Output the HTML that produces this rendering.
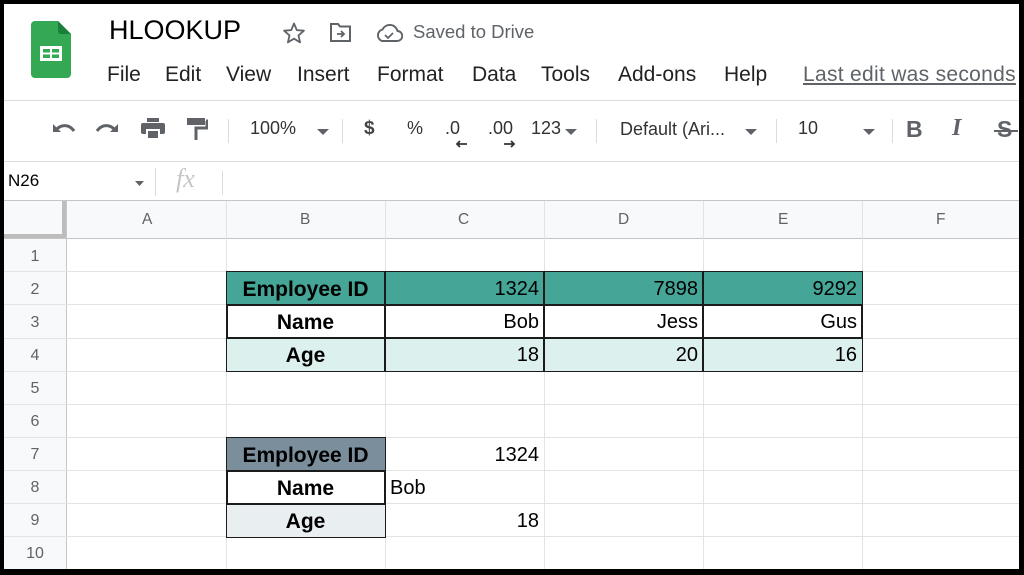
<!DOCTYPE html>
<html><head><meta charset="utf-8"><style>
*{margin:0;padding:0;box-sizing:border-box}
body{width:1024px;height:575px;background:#000;position:relative;overflow:hidden;font-family:"Liberation Sans",Arial,sans-serif}
#app{position:absolute;left:4px;top:4px;width:1015px;height:565px;background:#fff;overflow:hidden}
.a{position:absolute;white-space:nowrap}
.g{color:#5f6368}
.hl{position:absolute;background:#e2e3e3;height:1px}
.vl{position:absolute;background:#e2e3e3;width:1px}
.cell{position:absolute;height:34px;line-height:35px;font-size:20px;color:#000;padding:0 5px}
.b{font-weight:bold;font-size:21px}
</style></head><body><div id="app">
<svg class="a" style="left:27px;top:17px" width="40" height="57" viewBox="0 0 40 57">
<path d="M4 0H27L40 13V53a4 4 0 0 1-4 4H4a4 4 0 0 1-4-4V4a4 4 0 0 1 4-4z" fill="#34a853"/>
<path d="M27 0L40 13H30a3 3 0 0 1-3-3z" fill="#188038"/>
<rect x="9" y="25" width="22" height="15" fill="#fff"/>
<rect x="12" y="28" width="7" height="3.5" fill="#34a853"/><rect x="21" y="28" width="7" height="3.5" fill="#34a853"/>
<rect x="12" y="33.5" width="7" height="3.5" fill="#34a853"/><rect x="21" y="33.5" width="7" height="3.5" fill="#34a853"/>
</svg>
<div class="a" style="left:105px;top:11px;font-size:27px;color:#000">HLOOKUP</div>
<svg class="a" style="left:278px;top:17px" width="24" height="24" viewBox="0 0 24 24"><path d="M12 2.5l2.8 6.6 7.1.6-5.4 4.7 1.6 7-6.1-3.7-6.1 3.7 1.6-7L2.1 9.7l7.1-.6z" fill="none" stroke="#5f6368" stroke-width="1.8" stroke-linejoin="round"/></svg>
<svg class="a" style="left:325px;top:18px" width="24" height="22" viewBox="0 0 24 22"><path d="M2 2h7l2 2.5h10V19H2z" fill="none" stroke="#5f6368" stroke-width="2"/><path d="M8 12h7M12 9l3 3-3 3" fill="none" stroke="#5f6368" stroke-width="1.8"/></svg>
<svg class="a" style="left:371px;top:18px" width="28" height="22" viewBox="0 0 28 22"><path d="M7 19h15a5 5 0 0 0 .5-10A8 8 0 0 0 7.5 7.5 6 6 0 0 0 7 19z" fill="none" stroke="#5f6368" stroke-width="1.9"/><path d="M10 13l3 3 5-5" fill="none" stroke="#5f6368" stroke-width="1.8"/></svg>
<div class="a g" style="left:409px;top:17px;font-size:18.5px">Saved to Drive</div>
<div class="a" style="left:103px;top:59px;font-size:21px;color:#222">
<span style="position:absolute;left:0">File</span><span style="position:absolute;left:58px">Edit</span><span style="position:absolute;left:119px">View</span><span style="position:absolute;left:190px">Insert</span><span style="position:absolute;left:270px">Format</span><span style="position:absolute;left:365px">Data</span><span style="position:absolute;left:434px">Tools</span><span style="position:absolute;left:511px">Add-ons</span><span style="position:absolute;left:617px">Help</span></div>
<div class="a g" style="left:799px;top:59px;font-size:21px;letter-spacing:0.3px;text-decoration:underline">Last edit was seconds</div>
<div class="hl" style="left:0;top:96px;width:1015px;background:#dadce0"></div>
<svg class="a" style="left:46px;top:115px" width="28" height="20" viewBox="0 0 28 20"><path d="M6 11c5-6 13-6 18 1" fill="none" stroke="#5f6368" stroke-width="3"/><path d="M3 5v8h8z" fill="#5f6368"/></svg>
<svg class="a" style="left:89px;top:115px" width="28" height="20" viewBox="0 0 28 20"><path d="M22 11C17 5 9 5 4 12" fill="none" stroke="#5f6368" stroke-width="3"/><path d="M25 5v8h-8z" fill="#5f6368"/></svg>
<svg class="a" style="left:136px;top:113px" width="26" height="24" viewBox="0 0 26 24"><rect x="7" y="1" width="12" height="4" fill="#5f6368"/><rect x="1" y="6" width="24" height="11" rx="2" fill="#5f6368"/><rect x="7" y="13" width="12" height="9" fill="#5f6368" stroke="#fff" stroke-width="2"/></svg>
<svg class="a" style="left:182px;top:113px" width="22" height="26" viewBox="0 0 22 26"><rect x="1" y="1" width="18" height="7" fill="#5f6368"/><path d="M20 4h1v7H10v12" fill="none" stroke="#5f6368" stroke-width="3"/></svg>
<div class="vl" style="left:224px;top:115px;height:24px;background:#dadce0"></div>
<div class="a" style="left:246px;top:114px;font-size:18px;color:#333">100%</div>
<svg class="a" style="left:313px;top:125px" width="12" height="6"><path d="M0 0h12L6 6z" fill="#5f6368"/></svg>
<div class="vl" style="left:338px;top:115px;height:24px;background:#dadce0"></div>
<div class="a" style="left:360px;top:114px;font-size:19px;font-weight:bold;color:#444">$</div>
<div class="a" style="left:403px;top:114px;font-size:18px;color:#333">%</div>
<div class="a" style="left:441px;top:114px;font-size:18px;color:#333">.0</div>
<svg class="a" style="left:451px;top:136px" width="12" height="8"><path d="M12 4H2M5 1L2 4l3 3" stroke="#333" stroke-width="1.8" fill="none"/></svg>
<div class="a" style="left:484px;top:114px;font-size:18px;color:#333">.00</div>
<svg class="a" style="left:500px;top:136px" width="12" height="8"><path d="M0 4h10M7 1l3 3-3 3" stroke="#333" stroke-width="1.8" fill="none"/></svg>
<div class="a" style="left:527px;top:114px;font-size:18px;color:#333">123</div>
<svg class="a" style="left:561px;top:125px" width="12" height="6"><path d="M0 0h12L6 6z" fill="#5f6368"/></svg>
<div class="vl" style="left:592px;top:115px;height:24px;background:#dadce0"></div>
<div class="a" style="left:616px;top:115px;font-size:18px;color:#333">Default (Ari...</div>
<svg class="a" style="left:741px;top:125px" width="12" height="6"><path d="M0 0h12L6 6z" fill="#5f6368"/></svg>
<div class="vl" style="left:772px;top:115px;height:24px;background:#dadce0"></div>
<div class="a" style="left:794px;top:114px;font-size:18px;color:#333">10</div>
<svg class="a" style="left:859px;top:125px" width="12" height="6"><path d="M0 0h12L6 6z" fill="#5f6368"/></svg>
<div class="vl" style="left:888px;top:115px;height:24px;background:#dadce0"></div>
<div class="a" style="left:902px;top:112px;font-size:23px;font-weight:bold;color:#5f6368">B</div>
<div class="a" style="left:948px;top:111px;font-size:24px;font-style:italic;font-weight:bold;font-family:'Liberation Serif',serif;color:#5f6368">I</div>
<div class="a" style="left:993px;top:112px;font-size:23px;font-weight:bold;color:#5f6368">S</div>
<div class="a" style="left:990px;top:126px;width:24px;height:2px;background:#5f6368"></div>
<div class="hl" style="left:0;top:157px;width:1015px;background:#dadce0"></div>
<div class="a" style="left:4px;top:167px;font-size:17px;color:#000">N26</div>
<svg class="a" style="left:131px;top:177px" width="9" height="5"><path d="M0 0h9L4.5 5z" fill="#5f6368"/></svg>
<div class="vl" style="left:151px;top:164px;height:28px;background:#dadce0"></div>
<div class="a" style="left:172px;top:160px;font-size:26px;font-style:italic;font-family:'Liberation Serif',serif;color:#c4c7c5">fx</div>
<div class="vl" style="left:218px;top:167px;height:24px;background:#dadce0"></div>
<div class="hl" style="left:0;top:196px;width:1015px;background:#c4c7c5"></div>
<div class="a" style="left:0;top:197px;width:1015px;height:37px;background:#f8f9fa"></div>
<div class="a" style="left:0;top:197px;width:62px;height:37px;background:#f8f9fa;border-right:4px solid #bdbdbd;border-bottom:4px solid #bdbdbd"></div>
<div class="a g" style="left:138px;top:207px;font-size:15.5px">A</div>
<div class="a g" style="left:296px;top:207px;font-size:15.5px">B</div>
<div class="a g" style="left:454px;top:207px;font-size:15.5px">C</div>
<div class="a g" style="left:614px;top:207px;font-size:15.5px">D</div>
<div class="a g" style="left:774px;top:207px;font-size:15.5px">E</div>
<div class="a g" style="left:932px;top:207px;font-size:15.5px">F</div>
<div class="hl" style="left:0;top:234px;width:1015px;background:#c4c7c5"></div>
<div class="a" style="left:0;top:235px;width:62px;height:330px;background:#f8f9fa"></div>
<div class="vl" style="left:62px;top:197px;height:370px;background:#c4c7c5"></div>
<div class="vl" style="left:222px;top:197px;height:370px"></div>
<div class="vl" style="left:381px;top:197px;height:370px"></div>
<div class="vl" style="left:540px;top:197px;height:370px"></div>
<div class="vl" style="left:699px;top:197px;height:370px"></div>
<div class="vl" style="left:858px;top:197px;height:370px"></div>
<div class="hl" style="left:0;top:267px;width:1015px"></div>
<div class="hl" style="left:0;top:300px;width:1015px"></div>
<div class="hl" style="left:0;top:334px;width:1015px"></div>
<div class="hl" style="left:0;top:367px;width:1015px"></div>
<div class="hl" style="left:0;top:400px;width:1015px"></div>
<div class="hl" style="left:0;top:433px;width:1015px"></div>
<div class="hl" style="left:0;top:466px;width:1015px"></div>
<div class="hl" style="left:0;top:499px;width:1015px"></div>
<div class="hl" style="left:0;top:532px;width:1015px"></div>
<div class="a g" style="left:0;top:236px;width:62px;font-size:16px;line-height:33px;text-align:center">1<br>2<br>3<br>4<br>5<br>6<br>7<br>8<br>9<br>10</div>
<div class="a" style="left:222px;top:267px;width:637px;height:101px;border:2px solid #1b1b1b;background:#fff"></div>
<div class="a" style="left:223px;top:268px;width:635px;height:32px;background:#45a597"></div>
<div class="a" style="left:223px;top:335px;width:635px;height:32px;background:#dcf0ee"></div>
<div class="a" style="left:222px;top:300px;width:637px;height:2px;background:#1b1b1b"></div>
<div class="a" style="left:222px;top:333px;width:637px;height:2px;background:#1b1b1b"></div>
<div class="a" style="left:380px;top:267px;width:2px;height:101px;background:#1b1b1b"></div>
<div class="a" style="left:539px;top:267px;width:2px;height:101px;background:#1b1b1b"></div>
<div class="a" style="left:698px;top:267px;width:2px;height:101px;background:#1b1b1b"></div>
<div class="cell b" style="left:222px;top:268px;width:159px;text-align:center">Employee ID</div>
<div class="cell b" style="left:222px;top:301px;width:159px;text-align:center">Name</div>
<div class="cell b" style="left:222px;top:334px;width:159px;text-align:center">Age</div>
<div class="cell" style="left:381px;top:268px;width:159px;text-align:right">1324</div>
<div class="cell" style="left:540px;top:268px;width:159px;text-align:right">7898</div>
<div class="cell" style="left:699px;top:268px;width:159px;text-align:right">9292</div>
<div class="cell" style="left:381px;top:301px;width:159px;text-align:right">Bob</div>
<div class="cell" style="left:540px;top:301px;width:159px;text-align:right">Jess</div>
<div class="cell" style="left:699px;top:301px;width:159px;text-align:right">Gus</div>
<div class="cell" style="left:381px;top:334px;width:159px;text-align:right">18</div>
<div class="cell" style="left:540px;top:334px;width:159px;text-align:right">20</div>
<div class="cell" style="left:699px;top:334px;width:159px;text-align:right">16</div>
<div class="a" style="left:222px;top:433px;width:160px;height:101px;border:2px solid #1b1b1b;background:#fff"></div>
<div class="a" style="left:223px;top:434px;width:158px;height:32px;background:#7a8f9b"></div>
<div class="a" style="left:223px;top:501px;width:158px;height:32px;background:#e9eef1"></div>
<div class="a" style="left:222px;top:466px;width:160px;height:2px;background:#1b1b1b"></div>
<div class="a" style="left:222px;top:499px;width:160px;height:2px;background:#1b1b1b"></div>
<div class="cell b" style="left:222px;top:434px;width:159px;text-align:center">Employee ID</div>
<div class="cell b" style="left:222px;top:467px;width:159px;text-align:center">Name</div>
<div class="cell b" style="left:222px;top:500px;width:159px;text-align:center">Age</div>
<div class="cell" style="left:381px;top:434px;width:159px;text-align:right">1324</div>
<div class="cell" style="left:381px;top:467px;width:159px;text-align:left">Bob</div>
<div class="cell" style="left:381px;top:500px;width:159px;text-align:right">18</div>
</div></body></html>
